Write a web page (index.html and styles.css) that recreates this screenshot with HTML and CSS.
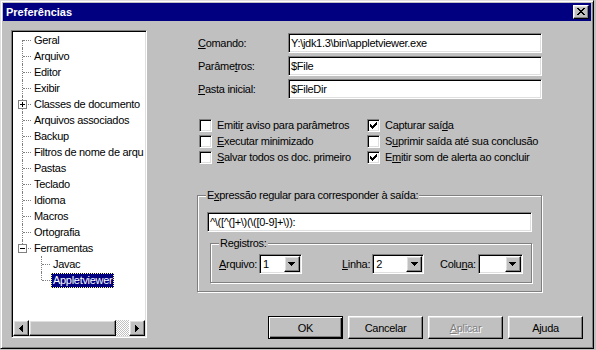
FILE: index.html
```html
<!DOCTYPE html>
<html>
<head>
<meta charset="utf-8">
<link rel="stylesheet" href="styles.css">
</head>
<body>
<div class="window">
  <div class="titlebar">
    <span class="title">Preferências</span>
    <button class="close"><svg width="8" height="7" viewBox="0 0 8 7" shape-rendering="crispEdges"><path d="M0 0h2v1h-2z M6 0h2v1h-2z M1 1h2v1h-2z M5 1h2v1h-2z M2 2h4v1h-4z M3 3h2v1h-2z M2 4h4v1h-4z M1 5h2v1h-2z M5 5h2v1h-2z M0 6h2v1h-2z M6 6h2v1h-2z" fill="#000"/></svg></button>
  </div>
  <div class="content">
    <div class="tree">
      <div class="tree-list">
        <div class="node first"><span class="label">Geral</span></div>
        <div class="node"><span class="label">Arquivo</span></div>
        <div class="node"><span class="label">Editor</span></div>
        <div class="node"><span class="label">Exibir</span></div>
        <div class="node"><span class="exp plus"></span><span class="label">Classes de documento</span></div>
        <div class="node"><span class="label">Arquivos associados</span></div>
        <div class="node"><span class="label">Backup</span></div>
        <div class="node"><span class="label">Filtros de nome de arqu</span></div>
        <div class="node"><span class="label">Pastas</span></div>
        <div class="node"><span class="label">Teclado</span></div>
        <div class="node"><span class="label">Idioma</span></div>
        <div class="node"><span class="label">Macros</span></div>
        <div class="node"><span class="label">Ortografia</span></div>
        <div class="node last"><span class="exp minus"></span><span class="label">Ferramentas</span></div>
        <div class="node child"><span class="label">Javac</span></div>
        <div class="node child last"><span class="label selected">Appletviewer</span></div>
      </div>
      <div class="hscroll">
        <div class="sbtn"><svg width="4" height="7" viewBox="0 0 4 7" shape-rendering="crispEdges"><path d="M4 0v7h-1v-1h-1v-1h-1v-1h-1v-1h1v-1h1v-1h1v-1z" fill="#000"/></svg></div>
        <div class="thumb"></div>
        <div class="track"></div>
        <div class="sbtn"><svg width="4" height="7" viewBox="0 0 4 7" shape-rendering="crispEdges"><path d="M0 0h1v1h1v1h1v1h1v1h-1v1h-1v1h-1v1h-1z" fill="#000"/></svg></div>
      </div>
    </div>

    <div class="panel">
      <div class="fields">
        <label class="flabel"><u>C</u>omando:</label>
        <div class="edit">Y:\jdk1.3\bin\appletviewer.exe</div>
        <label class="flabel">Parâme<u>t</u>ros:</label>
        <div class="edit">$File</div>
        <label class="flabel"><u>P</u>asta inicial:</label>
        <div class="edit">$FileDir</div>
      </div>

      <div class="checks">
        <div class="check"><span class="box"></span><span>Emiti<u>r</u> aviso para parâmetros</span></div>
        <div class="check"><span class="box on"><svg width="7" height="7" viewBox="0 0 7 7" shape-rendering="crispEdges"><path d="M6 0h1v1h-1z M5 1h2v1h-2z M0 2h1v1h-1z M4 2h3v1h-3z M0 3h2v1h-2z M3 3h3v1h-3z M0 4h5v1h-5z M1 5h3v1h-3z M2 6h1v1h-1z" fill="#000"/></svg></span><span>Capturar saí<u>d</u>a</span></div>
        <div class="check"><span class="box"></span><span><u>E</u>xecutar minimizado</span></div>
        <div class="check"><span class="box"></span><span>S<u>u</u>primir saída até sua conclusão</span></div>
        <div class="check"><span class="box"></span><span><u>S</u>alvar todos os doc. primeiro</span></div>
        <div class="check"><span class="box on"><svg width="7" height="7" viewBox="0 0 7 7" shape-rendering="crispEdges"><path d="M6 0h1v1h-1z M5 1h2v1h-2z M0 2h1v1h-1z M4 2h3v1h-3z M0 3h2v1h-2z M3 3h3v1h-3z M0 4h5v1h-5z M1 5h3v1h-3z M2 6h1v1h-1z" fill="#000"/></svg></span><span>E<u>m</u>itir som de alerta ao concluir</span></div>
      </div>

      <div class="group expr">
        <span class="legend">E<u>x</u>pressão regular para corresponder à saída:</span>
        <div class="edit regex">^\([^(]+\)(\([0-9]+\)):</div>
        <div class="group reg">
          <span class="legend">Registros:</span>
          <div class="reg-row">
            <div class="pair"><span><u>A</u>rquivo:</span><div class="combo w1"><span class="val">1</span><span class="drop"><svg width="7" height="4" viewBox="0 0 7 4" shape-rendering="crispEdges"><path d="M0 0h7v1h-1v1h-1v1h-1v1h-1v-1h-1v-1h-1v-1h-1z" fill="#000"/></svg></span></div></div>
            <div class="pair"><span><u>L</u>inha:</span><div class="combo w2"><span class="val">2</span><span class="drop"><svg width="7" height="4" viewBox="0 0 7 4" shape-rendering="crispEdges"><path d="M0 0h7v1h-1v1h-1v1h-1v1h-1v-1h-1v-1h-1v-1h-1z" fill="#000"/></svg></span></div></div>
            <div class="pair"><span>Colu<u>n</u>a:</span><div class="combo w3"><span class="val"></span><span class="drop"><svg width="7" height="4" viewBox="0 0 7 4" shape-rendering="crispEdges"><path d="M0 0h7v1h-1v1h-1v1h-1v1h-1v-1h-1v-1h-1v-1h-1z" fill="#000"/></svg></span></div></div>
          </div>
        </div>
      </div>

      <div class="buttons">
        <button class="btn default">OK</button>
        <button class="btn">Cancelar</button>
        <button class="btn disabled"><u>A</u>plicar</button>
        <button class="btn">Ajuda</button>
      </div>
    </div>
  </div>
</div>
</body>
</html>
```
FILE: styles.css
```css
* { box-sizing: border-box; }
html, body { margin: 0; padding: 0; }
body {
  background: #c0c0c0;
  width: 596px;
  height: 350px;
  overflow: hidden;
  font-family: "Liberation Sans", Arial, sans-serif;
  font-size: 11px;
  letter-spacing: -0.3px;
  color: #000;
}
u { text-decoration: underline; text-underline-offset: 1px; }

.window {
  width: 594px;
  height: 349px;
  background: #c0c0c0;
  border: 1px solid;
  border-color: #dfdfdf #000 #000 #dfdfdf;
  box-shadow: inset 1px 1px #fff, inset -1px -1px #808080;
  padding: 2px;
  display: flex;
  flex-direction: column;
}

.titlebar {
  height: 18px;
  flex: none;
  background: #000080;
  display: flex;
  align-items: center;
  justify-content: space-between;
  padding: 0 2px 0 3px;
}
.title { color: #fff; font-weight: bold; letter-spacing: 0; font-size: 11px; }

.close, .btn, .sbtn, .thumb, .drop {
  background: #c0c0c0;
  border: 1px solid;
  border-color: #fff #000 #000 #fff;
  box-shadow: inset -1px -1px #808080, inset 1px 1px #dfdfdf;
}
.close {
  width: 16px;
  height: 14px;
  padding: 0;
  display: flex;
  align-items: center;
  justify-content: center;
}
.close svg { display: block; margin-top: -1px; }

.content {
  flex: 1;
  display: flex;
  padding: 9px 0 7px 8px;
}

/* tree */
.tree {
  width: 136px;
  height: 308px;
  flex: none;
  background: #fff;
  border: 1px solid;
  border-color: #808080 #fff #fff #808080;
  box-shadow: inset 1px 1px #000, inset -1px -1px #dfdfdf;
  padding: 1px;
  display: flex;
  flex-direction: column;
}
.tree-list {
  flex: 1;
  overflow: hidden;
  white-space: nowrap;
}
.node {
  position: relative;
  height: 16px;
  padding-left: 19px;
  display: flex;
  align-items: center;
}
.node::before {
  content: "";
  position: absolute;
  left: 9px;
  top: 0;
  bottom: 0;
  border-left: 1px dotted #808080;
}
.node::after {
  content: "";
  position: absolute;
  left: 10px;
  top: 8px;
  width: 8px;
  border-top: 1px dotted #808080;
}
.node.first::before { top: 8px; }
.node.last::before { bottom: 8px; }
.node.child { padding-left: 38px; }
.node.child::before { left: 28px; }
.node.child::after { left: 29px; }

.label {
  padding: 0 2px;
  line-height: 15px;
  height: 15px;
}
.label.selected {
  background: #000080;
  color: #fff;
  outline: 1px dotted #ffff80;
  outline-offset: -1px;
}
.exp {
  position: absolute;
  left: 5px;
  top: 4px;
  width: 9px;
  height: 9px;
  border: 1px solid #808080;
  background: #fff;
  z-index: 1;
}
.exp::before {
  content: "";
  position: absolute;
  left: 1px;
  top: 3px;
  width: 5px;
  height: 1px;
  background: #000;
}
.exp.plus::after {
  content: "";
  position: absolute;
  left: 3px;
  top: 1px;
  width: 1px;
  height: 5px;
  background: #000;
}

.hscroll {
  height: 16px;
  flex: none;
  display: flex;
}
.sbtn {
  width: 16px;
  height: 16px;
  display: flex;
  align-items: center;
  justify-content: center;
}
.thumb { width: 87px; height: 16px; }
.track {
  flex: 1;
  background: repeating-conic-gradient(#fff 0 25%, #c0c0c0 0 50%) 0 0 / 2px 2px;
}

/* right panel */
.panel {
  margin-left: 50px;
  width: 386px;
  display: flex;
  flex-direction: column;
  padding-top: 3px;
}
.fields {
  display: grid;
  grid-template-columns: 91px 254px;
  grid-auto-rows: 20px;
  row-gap: 3px;
  align-items: center;
}
.flabel { padding-left: 1px; }
.edit {
  height: 20px;
  background: #fff;
  border: 1px solid;
  border-color: #808080 #fff #fff #808080;
  box-shadow: inset 1px 1px #000, inset -1px -1px #dfdfdf;
  padding: 0 2px 0 2px;
  line-height: 18px;
  white-space: nowrap;
  overflow: hidden;
}

.checks {
  margin-top: 18px;
  padding-left: 2px;
  display: grid;
  grid-template-columns: 168px auto;
  grid-auto-rows: 16px;
}
.check {
  display: flex;
  align-items: center;
  white-space: nowrap;
}
.box {
  width: 13px;
  height: 13px;
  flex: none;
  margin-right: 5px;
  background: #fff;
  border: 1px solid;
  border-color: #808080 #fff #fff #808080;
  box-shadow: inset 1px 1px #000, inset -1px -1px #dfdfdf;
  display: flex;
  align-items: center;
  justify-content: center;
}
.box svg { display: block; }

.group {
  position: relative;
  border: 1px solid #808080;
  box-shadow: inset 1px 1px #fff, 1px 1px 0 #fff;
}
.legend {
  position: absolute;
  top: -7px;
  left: 8px;
  padding: 0 1px;
  line-height: 13px;
  background: #c0c0c0;
  white-space: nowrap;
}
.expr {
  margin-top: 30px;
  width: 345px;
  height: 97px;
  padding: 16px 9px 0 9px;
}
.regex { width: 325px; }
.reg {
  margin-top: 11px;
  margin-left: 3px;
  width: 322px;
  height: 40px;
  padding: 10px 0 0 8px;
}
.reg-row {
  display: grid;
  grid-template-columns: 123px 98px auto;
}
.pair {
  display: flex;
  align-items: center;
  gap: 2px;
  white-space: nowrap;
}
.combo {
  height: 20px;
  background: #fff;
  border: 1px solid;
  border-color: #808080 #fff #fff #808080;
  box-shadow: inset 1px 1px #000, inset -1px -1px #dfdfdf;
  padding: 1px;
  display: flex;
}
.combo.w1 { width: 43px; }
.combo.w2 { width: 52px; }
.combo.w3 { width: 45px; }
.combo .val { flex: 1; padding-left: 2px; line-height: 16px; }
.drop {
  width: 16px;
  height: 16px;
  display: flex;
  align-items: center;
  justify-content: center;
}
.drop svg { display: block; }

.buttons {
  margin-top: auto;
  display: flex;
  justify-content: flex-end;
  gap: 5px;
}
.btn {
  width: 75px;
  height: 23px;
  padding: 0;
  font: inherit;
  letter-spacing: inherit;
  color: #000;
}
.btn.default {
  border: 1px solid #000;
  box-shadow: inset 1px 1px #fff, inset -1px -1px #000, inset -2px -2px #808080;
}
.btn.disabled {
  color: #808080;
  text-shadow: 1px 1px 0 #fff;
}
```
